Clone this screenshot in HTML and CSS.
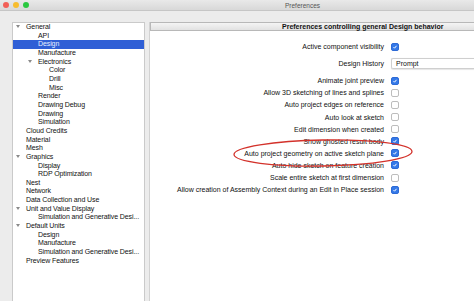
FILE: index.html
```html
<!DOCTYPE html>
<html lang="en">
<head>
    <meta charset="UTF-8">
    <meta name="viewport" content="width=device-width,initial-scale=1">
    <title>Preferences</title>
    <link rel="stylesheet" href="styles.css">
</head>
<body>
    <div class="titlebar">
        <span class="light red"></span>
        <span class="light yellow"></span>
        <span class="light green"></span>
        <span class="title">Preferences</span>
    </div>

    <div class="main">
        <ul class="tree">
            <li class="l0"><span class="twisty"></span>General</li>
            <li class="l1">API</li>
            <li class="l1 selected">Design</li>
            <li class="l1">Manufacture</li>
            <li class="l1"><span class="twisty"></span>Electronics</li>
            <li class="l2">Color</li>
            <li class="l2">Drill</li>
            <li class="l2">Misc</li>
            <li class="l1">Render</li>
            <li class="l1">Drawing Debug</li>
            <li class="l1">Drawing</li>
            <li class="l1">Simulation</li>
            <li class="l0">Cloud Credits</li>
            <li class="l0">Material</li>
            <li class="l0">Mesh</li>
            <li class="l0"><span class="twisty"></span>Graphics</li>
            <li class="l1">Display</li>
            <li class="l1">RDP Optimization</li>
            <li class="l0">Nest</li>
            <li class="l0">Network</li>
            <li class="l0">Data Collection and Use</li>
            <li class="l0"><span class="twisty"></span>Unit and Value Display</li>
            <li class="l1">Simulation and Generative Desi...</li>
            <li class="l0"><span class="twisty"></span>Default Units</li>
            <li class="l1">Design</li>
            <li class="l1">Manufacture</li>
            <li class="l1">Simulation and Generative Desi...</li>
            <li class="l0">Preview Features</li>
        </ul>

        <div class="pane">
            <div class="pane-header">Preferences controlling general Design behavior</div>
            <div class="options">
                <div class="row">
                    <label>Active component visibility</label>
                    <span class="check on"><svg viewBox="0 0 8 8"><path d="M2 4.2 3.4 5.6 6 2.4"/></svg></span>
                </div>
                <div class="row tall">
                    <label>Design History</label>
                    <div class="select">Prompt</div>
                </div>
                <div class="row">
                    <label>Animate joint preview</label>
                    <span class="check on"><svg viewBox="0 0 8 8"><path d="M2 4.2 3.4 5.6 6 2.4"/></svg></span>
                </div>
                <div class="row">
                    <label>Allow 3D sketching of lines and splines</label>
                    <span class="check"></span>
                </div>
                <div class="row">
                    <label>Auto project edges on reference</label>
                    <span class="check"></span>
                </div>
                <div class="row">
                    <label>Auto look at sketch</label>
                    <span class="check"></span>
                </div>
                <div class="row">
                    <label>Edit dimension when created</label>
                    <span class="check"></span>
                </div>
                <div class="row">
                    <label>Show ghosted result body</label>
                    <span class="check on"><svg viewBox="0 0 8 8"><path d="M2 4.2 3.4 5.6 6 2.4"/></svg></span>
                </div>
                <div class="row">
                    <label>Auto project geometry on active sketch plane</label>
                    <span class="check on"><svg viewBox="0 0 8 8"><path d="M2 4.2 3.4 5.6 6 2.4"/></svg></span>
                </div>
                <div class="row">
                    <label>Auto hide sketch on feature creation</label>
                    <span class="check on"><svg viewBox="0 0 8 8"><path d="M2 4.2 3.4 5.6 6 2.4"/></svg></span>
                </div>
                <div class="row">
                    <label>Scale entire sketch at first dimension</label>
                    <span class="check"></span>
                </div>
                <div class="row">
                    <label>Allow creation of Assembly Context during an Edit in Place session</label>
                    <span class="check on"><svg viewBox="0 0 8 8"><path d="M2 4.2 3.4 5.6 6 2.4"/></svg></span>
                </div>
            </div>

            <!-- hand-drawn highlight around the setting -->
            <svg class="marker" viewBox="0 0 184 32">
                <ellipse cx="92" cy="16" rx="89" ry="13" transform="rotate(-1 92 16)"/>
            </svg>
        </div>
    </div>
</body>
</html>
```

FILE: styles.css
```css
body {
    margin: 0;
    background: #ececec;
    font-family: "Liberation Sans", Arial, sans-serif;
    font-size: 7px;
    color: #111;
    overflow: hidden;
    height: 301px;
}
.titlebar {
    height: 10px;
    display: flex;
    align-items: center;
    padding-left: 3px;
    gap: 4px;
    background: linear-gradient(#e9e9e9, #d8d8d8);
    border-bottom: 1px solid #c6c6c6;
}
.light {
    width: 6px;
    height: 6px;
    border-radius: 50%;
}
.red { background: #f25f57; }
.yellow { background: #f7bd2f; }
.green { background: #2ac840; }
.title {
    margin-left: 252px;
    color: #555;
    font-size: 6.5px;
}
.main {
    display: flex;
    gap: 4px;
    padding: 11px 0 0 12px;
    height: 279px;
}
.tree {
    list-style: none;
    margin: 0;
    padding: 0;
    width: 131px;
    background: white;
    border: 1px solid #cacaca;
    border-bottom: none;
    letter-spacing: -0.1px;
}
.tree li {
    height: 8.67px;
    line-height: 8.67px;
    white-space: nowrap;
}
.tree .l0 { padding-left: 13px; }
.tree .l1 { padding-left: 25px; }
.tree .l2 { padding-left: 36px; }
.tree .selected {
    background: #2f5fd6;
    color: #e8f0ff;
}
.twisty {
    display: inline-block;
    width: 0;
    height: 0;
    border-left: 2px solid transparent;
    border-right: 2px solid transparent;
    border-top: 3px solid #8a8a8a;
    margin-left: -10px;
    margin-right: 6px;
    vertical-align: 1px;
}
.pane {
    position: relative;
    flex: 1;
    background: white;
    border-left: 1px solid #d2d2d2;
}
.pane-header {
    height: 7px;
    line-height: 7px;
    padding-left: 131px;
    font-weight: bold;
    background: linear-gradient(#f4f4f4, #e2e2e2);
    border: 1px solid #b8b8b8;
    border-right: none;
    color: #111;
}
.options {
    padding-top: 9.65px;
}
.row {
    display: grid;
    grid-template-columns: 234px 1fr;
    column-gap: 7px;
    align-items: center;
    height: 12.1px;
}
.row.tall {
    height: 22px;
}
.row label {
    text-align: right;
    white-space: nowrap;
}
.check {
    width: 8px;
    height: 8px;
    box-sizing: border-box;
    border: 1px solid #bdbdbd;
    border-radius: 2px;
    background: white;
}
.check.on {
    background: #3479e8;
    border-color: #2d6ad6;
}
.check svg {
    display: block;
    width: 6px;
    height: 6px;
}
.check svg path {
    fill: none;
    stroke: white;
    stroke-width: 1.3;
}
.select {
    height: 10.6px;
    line-height: 10.6px;
    box-sizing: border-box;
    padding-left: 4px;
    border: 1px solid #cfcfcf;
    border-right: none;
    border-radius: 2px 0 0 2px;
    box-shadow: 0 0.5px 1px rgba(0,0,0,0.1);
}
.marker {
    position: absolute;
    left: 81px;
    top: 115px;
    width: 184px;
    height: 32px;
}
.marker ellipse {
    fill: none;
    stroke: #d3322b;
    stroke-width: 1.3;
}
```
